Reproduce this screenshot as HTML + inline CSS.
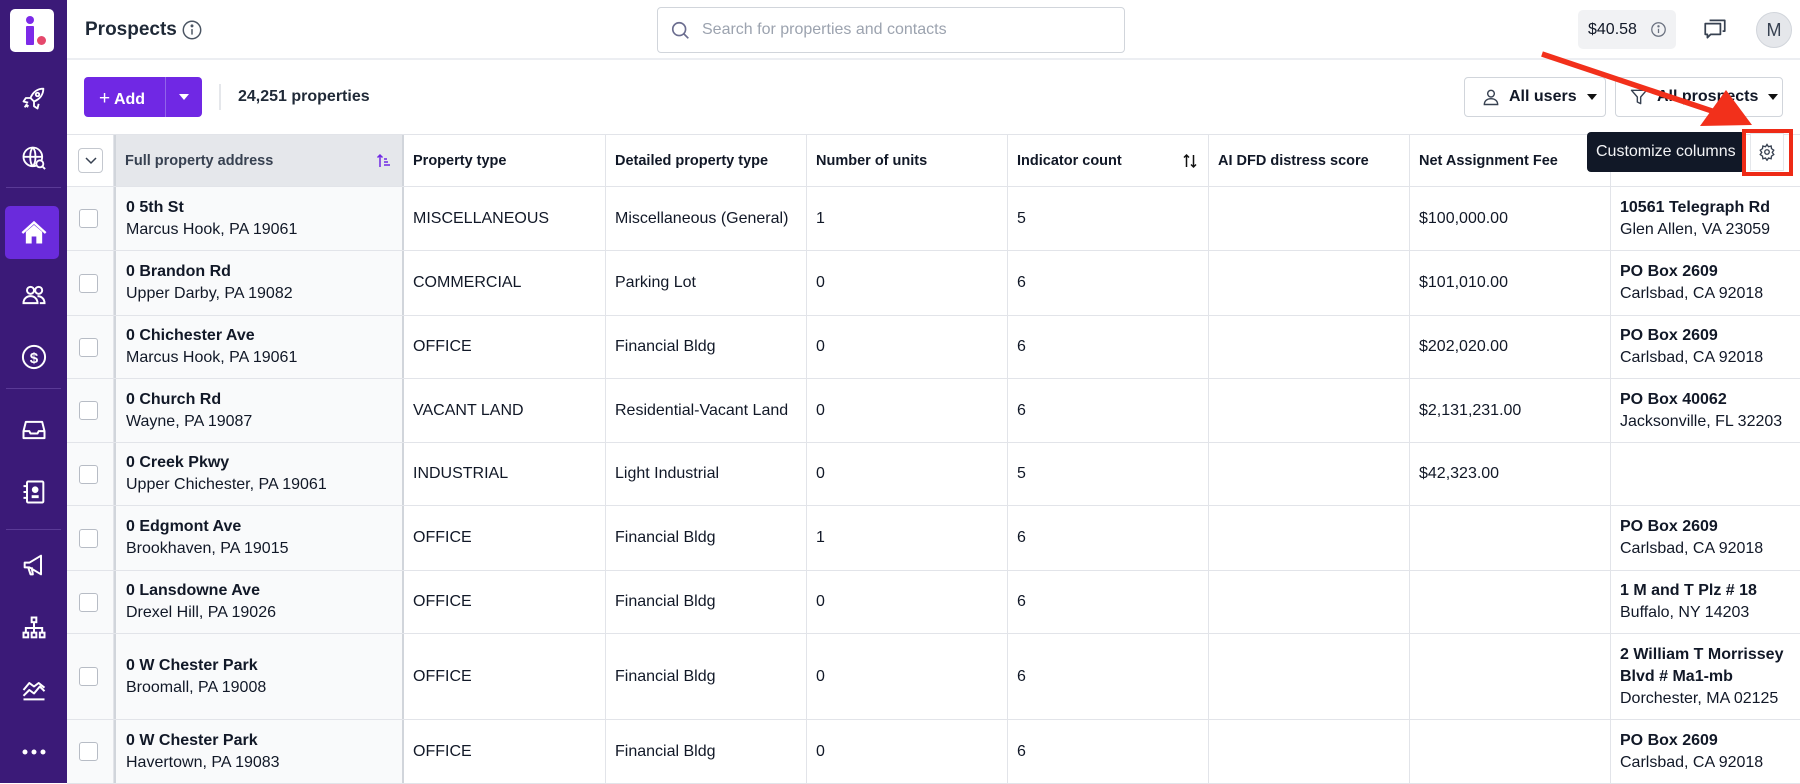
<!DOCTYPE html>
<html><head><meta charset="utf-8"><style>
*{box-sizing:border-box;margin:0;padding:0}
body{width:1800px;height:783px;overflow:hidden;font-family:"Liberation Sans",sans-serif;color:#111827;background:#fff;position:relative}
.sb{position:absolute;left:0;top:0;width:67px;height:783px;background:#3b1a78}
.ic{position:absolute;left:0;width:67px;display:flex;justify-content:center;align-items:center}
.div{position:absolute;left:6px;width:55px;height:1px;background:#5a3a96}
.hdr{position:absolute;left:67px;top:0;right:0;height:60px;border-bottom:2px solid #eceef2}
.btn{position:absolute;border:1px solid #d1d5db;border-radius:4px;background:#fff;display:flex;align-items:center;font-size:16px;font-weight:bold}
.grid{position:absolute;left:67px;top:134px;width:1733px}
.row{position:absolute;left:0;width:1733px;border-bottom:1px solid #e2e4e9}
.c{position:absolute;top:0;height:100%;border-right:1px solid #e2e4e9;display:flex;flex-direction:column;justify-content:center;padding-left:9px;font-size:16px;line-height:22px}
.h .c{font-size:14.5px;font-weight:bold}
.b{font-weight:bold}
.cb{width:19px;height:19px;border:1.5px solid #b7bcc5;border-radius:3px;background:#fff;margin-left:4px}
</style></head><body>
<div class="sb">
 <div style="position:absolute;left:10px;top:9px;width:44px;height:43px;background:#fff;border-radius:5px">
  <div style="position:absolute;left:16px;top:7px;width:8px;height:8px;border-radius:50%;background:#7c2ae8"></div>
  <div style="position:absolute;left:16px;top:17px;width:8px;height:19px;background:#7c2ae8;border-radius:1px"></div>
  <div style="position:absolute;left:27px;top:27px;width:9px;height:9px;border-radius:50%;background:#e5486c"></div>
 </div>
 <div class="ic" style="top:84px;height:28px"><svg width="28" height="28" viewBox="0 0 24 24" fill="none" stroke="#fff" stroke-width="1.6" stroke-linejoin="round"><path d="M20 4c-5 0-9 3-11 8l3 3c5-2 8-6 8-11z"/><path d="M9 12l-4 0-2 3 4 1M12 15v4l3 2 1-4"/><circle cx="15" cy="9" r="1.5"/><path d="M6 17l-2 3M7 18l-1 2"/></svg></div>
 <div class="ic" style="top:144px;height:28px"><svg width="28" height="28" viewBox="0 0 24 24" fill="none" stroke="#fff" stroke-width="1.6"><circle cx="11" cy="11" r="8"/><path d="M3 11h16M11 3c-3 3-3 13 0 16M11 3c3 3 3 13 0 16"/><circle cx="17" cy="17" r="3" fill="#3b1a78"/><path d="M19 19l2.5 2.5"/></svg></div>
 <div class="div" style="top:187px"></div>
 <div style="position:absolute;left:5px;top:206px;width:54px;height:53px;background:#6a2bdc;border-radius:5px"></div>
 <div class="ic" style="top:219px;height:28px"><svg width="30" height="28" viewBox="0 0 24 24"><path d="M2 12L12 3l10 9" fill="none" stroke="#fff" stroke-width="2"/><path d="M5 11v10h5v-6h4v6h5V11l-7-6z" fill="#fff"/></svg></div>
 <div class="ic" style="top:281px;height:28px"><svg width="28" height="28" viewBox="0 0 24 24" fill="none" stroke="#fff" stroke-width="1.7"><circle cx="9" cy="8" r="3"/><circle cx="16" cy="8" r="3"/><path d="M3 19c0-4 3-6 6-6s6 2 6 6zM15 13c3 0 6 2 6 6h-4"/></svg></div>
 <div class="ic" style="top:343px;height:28px"><svg width="28" height="28" viewBox="0 0 24 24" fill="none" stroke="#fff" stroke-width="1.7"><circle cx="12" cy="12" r="9.5"/><text x="12" y="17" text-anchor="middle" font-size="13" font-weight="bold" fill="#fff" stroke="none" font-family="Liberation Sans">$</text></svg></div>
 <div class="div" style="top:388px"></div>
 <div class="ic" style="top:416px;height:28px"><svg width="28" height="28" viewBox="0 0 24 24" fill="none" stroke="#fff" stroke-width="1.7" stroke-linejoin="round"><path d="M3 13l2-8h14l2 8v6H3zM3 13h5l1 2h6l1-2h5"/></svg></div>
 <div class="ic" style="top:478px;height:28px"><svg width="28" height="28" viewBox="0 0 24 24" fill="none" stroke="#fff" stroke-width="1.7"><rect x="6" y="3" width="14" height="18" rx="1"/><path d="M3 7h3M3 12h3M3 17h3"/><circle cx="13" cy="10" r="2" fill="#fff"/><path d="M10 16h6" stroke-width="2.5"/></svg></div>
 <div class="div" style="top:529px"></div>
 <div class="ic" style="top:551px;height:28px"><svg width="28" height="28" viewBox="0 0 24 24" fill="none" stroke="#fff" stroke-width="1.7" stroke-linejoin="round"><path d="M4 10h4l10-6v16L8 14H4zM7 14l2 6h2l-1-6"/></svg></div>
 <div class="ic" style="top:614px;height:28px"><svg width="28" height="28" viewBox="0 0 24 24" fill="none" stroke="#fff" stroke-width="1.7"><rect x="10" y="3" width="4" height="4"/><rect x="3" y="16" width="4" height="4"/><rect x="10" y="16" width="4" height="4"/><rect x="17" y="16" width="4" height="4"/><path d="M12 7v9M5 16v-4h14v4"/></svg></div>
 <div class="ic" style="top:676px;height:28px"><svg width="28" height="28" viewBox="0 0 24 24" fill="none" stroke="#fff" stroke-width="1.7" stroke-linejoin="round"><path d="M3 20h18M3 17l5-5 4 3 5-6 4 4M3 12l5-6 4 3 4-3 5 4"/></svg></div>
 <div class="ic" style="top:745px;height:14px"><svg width="24" height="6"><circle cx="3" cy="3" r="2.5" fill="#fff"/><circle cx="12" cy="3" r="2.5" fill="#fff"/><circle cx="21" cy="3" r="2.5" fill="#fff"/></svg></div>
</div>

<div class="hdr">
 <div style="position:absolute;left:18px;top:19px;font-size:19px;font-weight:bold;color:#1f2937">Prospects</div>
 <svg style="position:absolute;left:114px;top:19px" width="22" height="22" viewBox="0 0 24 24" fill="none" stroke="#4b5563" stroke-width="1.6"><circle cx="12" cy="12" r="9.5"/><path d="M12 11v6"/><circle cx="12" cy="7.5" r="0.8" fill="#4b5563"/></svg>
 <div style="position:absolute;left:590px;top:7px;width:468px;height:46px;border:1px solid #d1d5db;border-radius:4px">
  <svg style="position:absolute;left:12px;top:12px" width="22" height="22" viewBox="0 0 24 24" fill="none" stroke="#6b6d8f" stroke-width="1.8"><circle cx="10" cy="10" r="7"/><path d="M15 15l5 5"/></svg>
  <div style="position:absolute;left:44px;top:13px;font-size:16px;color:#9ca3af">Search for properties and contacts</div>
 </div>
 <div style="position:absolute;left:1511px;top:10px;width:98px;height:39px;background:#f1f2f4;border-radius:5px;font-size:16px;padding:11px 0 0 10px">$40.58</div>
 <svg style="position:absolute;left:1583px;top:21px" width="17" height="17" viewBox="0 0 24 24" fill="none" stroke="#6b7280" stroke-width="1.8"><circle cx="12" cy="12" r="9.5"/><path d="M12 11v6"/><circle cx="12" cy="7.5" r="0.8" fill="#6b7280"/></svg>
 <svg style="position:absolute;left:1635px;top:16px" width="26" height="26" viewBox="0 0 24 24" fill="none" stroke="#374151" stroke-width="1.6" stroke-linejoin="round"><path d="M7 4h14v10h-2M3 7h14v10H8l-3 3v-3H3z"/></svg>
 <div style="position:absolute;left:1689px;top:12px;width:36px;height:36px;border-radius:50%;background:#e5e7eb;border:1px solid #d1d5db;text-align:center;line-height:34px;font-size:18px;color:#374151">M</div>
</div>

<div style="position:absolute;left:84px;top:77px;width:118px;height:40px;background:#7028e4;border-radius:4px;color:#fff;font-size:16px;font-weight:bold">
 <div style="position:absolute;left:15px;top:11px"><span style="font-weight:normal;font-size:19px">+</span> Add</div>
 <div style="position:absolute;left:81px;top:0;width:1px;height:40px;background:#9163ea"></div>
 <div style="position:absolute;left:95px;top:17px;width:0;height:0;border-left:5px solid transparent;border-right:5px solid transparent;border-top:6px solid #fff"></div>
</div>
<div style="position:absolute;left:219px;top:84px;width:2px;height:26px;background:#e5e7eb"></div>
<div style="position:absolute;left:238px;top:88px;font-size:16px;font-weight:bold;color:#1f2937">24,251 properties</div>

<div class="btn" style="left:1464px;top:77px;width:142px;height:40px;padding-left:16px">
 <svg width="20" height="20" viewBox="0 0 24 24" fill="none" stroke="#374151" stroke-width="1.7"><circle cx="12" cy="8" r="4"/><path d="M4 21c0-5 4-7 8-7s8 2 8 7z"/></svg>
 <span style="margin-left:8px">All users</span><span style="margin-left:10px;border-left:5px solid transparent;border-right:5px solid transparent;border-top:6px solid #111"></span></div>
<div class="btn" style="left:1615px;top:77px;width:168px;height:40px;padding-left:13px">
 <svg width="20" height="22" viewBox="0 0 24 24" fill="none" stroke="#374151" stroke-width="1.7" stroke-linejoin="round"><path d="M3 4h18l-7 8v8l-4-2v-6z"/></svg>
 <span style="margin-left:8px">All prospects</span><span style="margin-left:10px;border-left:5px solid transparent;border-right:5px solid transparent;border-top:6px solid #111"></span></div>

<div class="grid">
 <div class="row h" style="top:0;height:53px;border-top:1px solid #e2e4e9">
  <div class="c" style="left:0;width:47px;align-items:flex-start;padding-left:11px"><div style="width:25px;height:25px;border:1px solid #c4c8cf;border-radius:4px;display:flex;align-items:center;justify-content:center"><svg width="12" height="8"><path d="M1 1l5 5 5-5" fill="none" stroke="#374151" stroke-width="1.5"/></svg></div></div>
  <div class="c" style="left:47px;width:290px;background:#e5e7eb;border-left:2px solid #d1d5db;border-right:2px solid #d1d5db;color:#374151">Full property address
   <svg style="position:absolute;right:10px;top:18px" width="16" height="16" viewBox="0 0 16 16" fill="none" stroke="#7028e4" stroke-width="1.5"><path d="M4 14V2M1.5 4.5L4 2l2.5 2.5M8 6h3M8 9h4M8 12h6"/></svg></div>
  <div class="c" style="left:337px;width:202px">Property type</div>
  <div class="c" style="left:539px;width:201px">Detailed property type</div>
  <div class="c" style="left:740px;width:201px">Number of units</div>
  <div class="c" style="left:941px;width:201px">Indicator count<svg style="position:absolute;right:10px;top:18px" width="16" height="16" viewBox="0 0 16 16" fill="none" stroke="#111" stroke-width="1.5"><path d="M4.5 14V2M2 4.5L4.5 2 7 4.5M11.5 2v12M9 11.5l2.5 2.5 2.5-2.5"/></svg></div>
  <div class="c" style="left:1142px;width:201px">AI DFD distress score</div>
  <div class="c" style="left:1343px;width:201px">Net Assignment Fee</div>
  <div class="c" style="left:1544px;width:189px;border-right:none"></div>
 </div>
</div>
<div class="grid" id="rows" style="top:187px"></div>

<div style="position:absolute;left:1587px;top:132px;width:158px;height:40px;background:#111827;border-radius:4px;color:#f3f4f6;font-size:16px;padding:11px 0 0 9px">Customize columns</div>
<div style="position:absolute;left:1750px;top:133px;width:34px;height:38px;background:#fff;border:1px solid #e5e7eb"></div>
<svg style="position:absolute;left:1758px;top:143px" width="18" height="18" viewBox="0 0 24 24" fill="none" stroke="#374151" stroke-width="1.8"><circle cx="12" cy="12" r="3"/><path d="M12 2l2 3 3.5-1 .5 3.5 3 2-2 3 2 3-3 2-.5 3.5-3.5-1-2 3-2-3-3.5 1-.5-3.5-3-2 2-3-2-3 3-2 .5-3.5 3.5 1z"/></svg>
<div style="position:absolute;left:1742px;top:129px;width:51px;height:47px;border:4px solid #ee2a16"></div>
<svg style="position:absolute;left:0;top:0" width="1800" height="200"><path d="M1542 54L1715 112" stroke="#f2301b" stroke-width="5.5"/><path d="M1752 125L1700 126L1726 90z" fill="#f2301b"/></svg>

<script>
var d=[
["0 5th St","Marcus Hook, PA 19061","MISCELLANEOUS","Miscellaneous (General)","1","5","$100,000.00",["10561 Telegraph Rd","Glen Allen, VA 23059"],64],
["0 Brandon Rd","Upper Darby, PA 19082","COMMERCIAL","Parking Lot","0","6","$101,010.00",["PO Box 2609","Carlsbad, CA 92018"],65],
["0 Chichester Ave","Marcus Hook, PA 19061","OFFICE","Financial Bldg","0","6","$202,020.00",["PO Box 2609","Carlsbad, CA 92018"],63],
["0 Church Rd","Wayne, PA 19087","VACANT LAND","Residential-Vacant Land","0","6","$2,131,231.00",["PO Box 40062","Jacksonville, FL 32203"],64],
["0 Creek Pkwy","Upper Chichester, PA 19061","INDUSTRIAL","Light Industrial","0","5","$42,323.00",null,63],
["0 Edgmont Ave","Brookhaven, PA 19015","OFFICE","Financial Bldg","1","6","",["PO Box 2609","Carlsbad, CA 92018"],65],
["0 Lansdowne Ave","Drexel Hill, PA 19026","OFFICE","Financial Bldg","0","6","",["1 M and T Plz # 18","Buffalo, NY 14203"],63],
["0 W Chester Park","Broomall, PA 19008","OFFICE","Financial Bldg","0","6","",["2 William T Morrissey","Blvd # Ma1-mb","Dorchester, MA 02125"],86],
["0 W Chester Park","Havertown, PA 19083","OFFICE","Financial Bldg","0","6","",["PO Box 2609","Carlsbad, CA 92018"],64]];
var h='',y=0;
d.forEach(function(r){
 var o=r[7]?('<span class="b">'+r[7][0]+'</span>'+(r[7].length==3?'<span class="b">'+r[7][1]+'</span>':'')+'<span>'+r[7][r[7].length-1]+'</span>'):'';
 h+='<div class="row" style="top:'+y+'px;height:'+r[8]+'px">'+
 '<div class="c" style="left:0;width:47px;padding-left:8px;background:#f9fafb"><div class="cb"></div></div>'+
 '<div class="c" style="left:47px;width:290px;background:#f9fafb;border-left:2px solid #d1d5db;border-right:2px solid #d1d5db;padding-left:10px"><span class="b">'+r[0]+'</span><span>'+r[1]+'</span></div>'+
 '<div class="c" style="left:337px;width:202px">'+r[2]+'</div>'+
 '<div class="c" style="left:539px;width:201px">'+r[3]+'</div>'+
 '<div class="c" style="left:740px;width:201px">'+r[4]+'</div>'+
 '<div class="c" style="left:941px;width:201px">'+r[5]+'</div>'+
 '<div class="c" style="left:1142px;width:201px"></div>'+
 '<div class="c" style="left:1343px;width:201px">'+r[6]+'</div>'+
 '<div class="c" style="left:1544px;width:189px;border-right:none">'+o+'</div></div>';
 y+=r[8];});
document.getElementById('rows').innerHTML=h;
</script>
</body></html>
